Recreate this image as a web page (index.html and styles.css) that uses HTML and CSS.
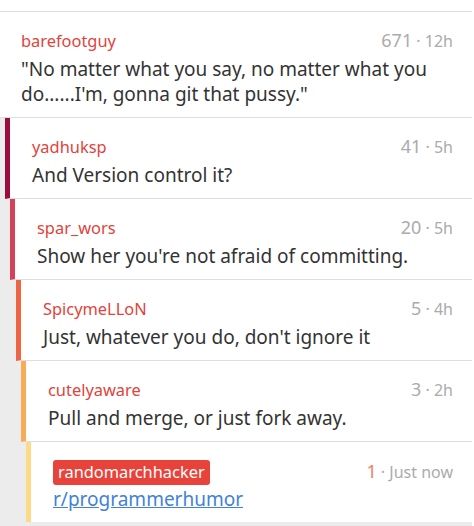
FILE: index.html
```html
<!DOCTYPE html>
<html>
<head>
<meta charset="utf-8">
<link rel="stylesheet" href="styles.css">
</head>
<body>
<div class="thread">
  <div class="comment d0">
    <div class="head"><span class="user">barefootguy</span><span class="meta"><span class="score">671</span><span class="time"> · 12h</span></span></div>
    <div class="text">"No matter what you say, no matter what you do......I'm, gonna git that pussy."</div>
  </div>
  <div class="comment d1">
    <div class="head"><span class="user">yadhuksp</span><span class="meta"><span class="score">41</span><span class="time"> · 5h</span></span></div>
    <div class="text">And Version control it?</div>
  </div>
  <div class="comment d2">
    <div class="head"><span class="user">spar_wors</span><span class="meta"><span class="score">20</span><span class="time"> · 5h</span></span></div>
    <div class="text">Show her you're not afraid of committing.</div>
  </div>
  <div class="comment d3">
    <div class="head"><span class="user">SpicymeLLoN</span><span class="meta"><span class="score">5</span><span class="time"> · 4h</span></span></div>
    <div class="text">Just, whatever you do, don't ignore it</div>
  </div>
  <div class="comment d4">
    <div class="head"><span class="user">cutelyaware</span><span class="meta"><span class="score">3</span><span class="time"> · 2h</span></span></div>
    <div class="text">Pull and merge, or just fork away.</div>
  </div>
  <div class="comment d5">
    <div class="head"><span class="user badge">randomarchhacker</span><span class="meta"><span class="score own">1</span><span class="time"> · Just now</span></span></div>
    <div class="text"><a class="link" href="#">r/programmerhumor</a></div>
  </div>
</div>
</body>
</html>
```

FILE: styles.css
```css
html, body {
  margin: 0;
  padding: 0;
  background: #ffffff;
  font-family: "Noto Sans", "Open Sans", sans-serif;
}

.thread {
  margin-top: 11px;
  border-top: 1px solid #dedede;
  background: #ececec;
  height: 514px;
  overflow: hidden;
  margin-right: 2px;
}

.comment {
  background: #ffffff;
  border-bottom: 1px solid #dedede;
  padding: 18px 19px 10px 22px;
  border-left: 5px solid transparent;
}

.comment.d0 { border-left: none; padding-left: 21px; }
.comment.d1 { margin-left: 5px; border-left-color: #9c0c3f; }
.comment.d2 { margin-left: 10px; border-left-color: #d6415a; }
.comment.d3 { margin-left: 16px; border-left-color: #ee6545; }
.comment.d4 { margin-left: 21px; border-left-color: #f9ac57; }
.comment.d5 { margin-left: 26px; border-left-color: #fdda88; border-bottom: none; }

.head {
  display: flex;
  justify-content: space-between;
  align-items: baseline;
  line-height: 20px;
  height: 20px;
}

.user {
  font-size: 16.4px;
  color: #e2433b;
}

.badge {
  background: #e8433a;
  color: #ffffff;
  border-radius: 3px;
  padding: 2px 5px 3px;
}

.meta {
  color: #ababab;
}

.score {
  font-size: 18px;
}

.score.own {
  color: #ee8062;
}

.time {
  font-size: 16px;
}

.text {
  margin-top: 7px;
  font-size: 19px;
  line-height: 25px;
  color: #333333;
}

.link {
  color: #3f82d8;
  text-decoration: underline;
}
```
